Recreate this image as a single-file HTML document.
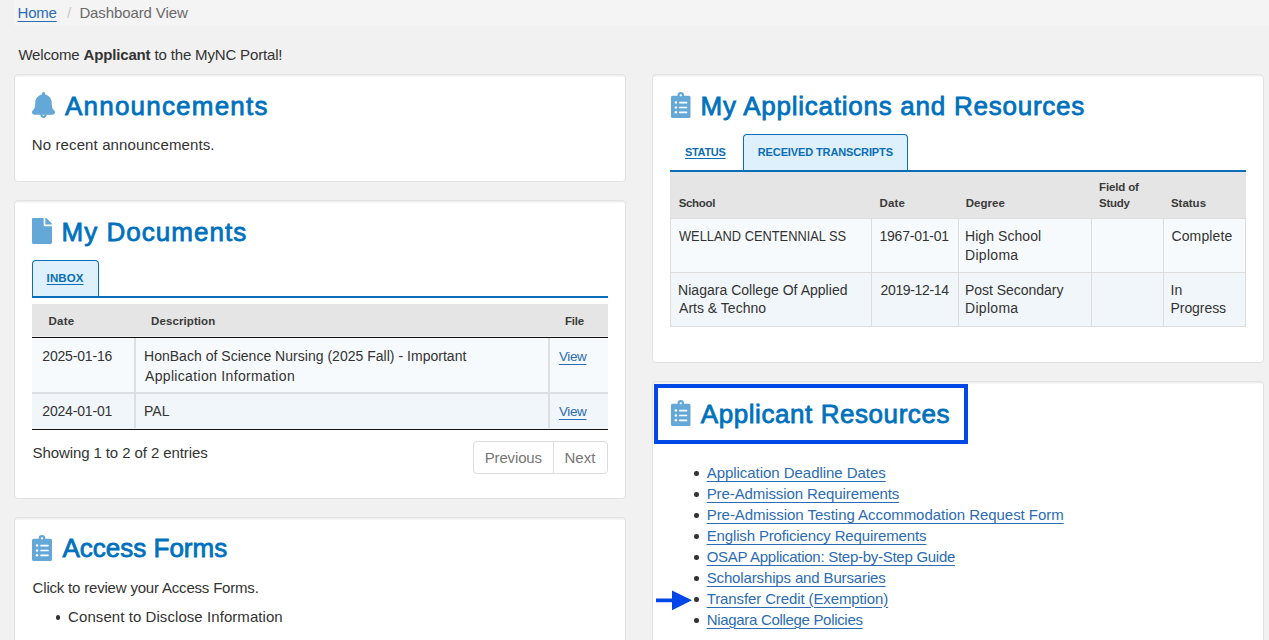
<!DOCTYPE html>
<html><head><meta charset="utf-8"><style>
html,body{margin:0;padding:0;}
body{background:#f1f1f1;font-family:"Liberation Sans", sans-serif;position:relative;}
.t{position:absolute;white-space:nowrap;line-height:20px;}
.h{-webkit-text-stroke:0.8px currentColor;}
.u{text-decoration:underline;text-decoration-thickness:1px;text-underline-offset:3px;}
.lnk .u{text-underline-offset:3px;}
.tabu .u{text-underline-offset:2px;}
.bl{display:inline-block;width:0;height:0;vertical-align:baseline;}

body{width:1269px;height:640px;overflow:hidden;}
</style></head><body>
<div style="position:absolute;left:14px;top:0px;width:1255px;height:26px;background:#f4f4f4;"></div>
<div style="position:absolute;left:14px;top:74px;width:612px;height:108px;background:linear-gradient(#f0f0f0 0 1px,#f6f6f6 1px 2px,#fff 2px);border:1px solid #e2e2e2;border-radius:4px;box-sizing:border-box;"></div>
<div style="position:absolute;left:14px;top:200px;width:612px;height:299px;background:linear-gradient(#f0f0f0 0 1px,#f6f6f6 1px 2px,#fff 2px);border:1px solid #e2e2e2;border-radius:4px;box-sizing:border-box;"></div>
<div style="position:absolute;left:14px;top:517px;width:612px;height:200px;background:linear-gradient(#f0f0f0 0 1px,#f6f6f6 1px 2px,#fff 2px);border:1px solid #e2e2e2;border-radius:4px;box-sizing:border-box;"></div>
<div style="position:absolute;left:652px;top:74px;width:612px;height:289px;background:linear-gradient(#f0f0f0 0 1px,#f6f6f6 1px 2px,#fff 2px);border:1px solid #e2e2e2;border-radius:4px;box-sizing:border-box;"></div>
<div style="position:absolute;left:652px;top:381px;width:612px;height:400px;background:linear-gradient(#f0f0f0 0 1px,#f6f6f6 1px 2px,#fff 2px);border:1px solid #e2e2e2;border-radius:4px;box-sizing:border-box;"></div>
<div style="position:absolute;left:32px;top:92px;width:23px;height:26px;line-height:0"><svg viewBox="0 0 448 512" width="23" height="26" preserveAspectRatio="none"><path fill="#64a8d8" d="M433.884 366.059C411.634 343.809 384 316.118 384 208c0-79.394-57.831-145.269-133.663-157.83A31.845 31.845 0 0 0 256 32c0-17.673-14.327-32-32-32s-32 14.327-32 32c0 6.75 2.095 13.008 5.663 18.17C121.831 62.731 64 128.606 64 208c0 108.118-27.643 135.809-49.893 158.059C-16.042 396.208 5.325 448 48.048 448H160c0 35.346 28.654 64 64 64s64-28.654 64-64h111.943c42.638 0 64.151-51.731 33.941-81.941zM224 472c-13.234 0-24-10.766-24-24h48c0 13.234-10.766 24-24 24z"/></svg></div>
<div style="position:absolute;left:32px;top:218px;width:20px;height:26px;line-height:0"><svg viewBox="0 0 384 512" width="20" height="26" preserveAspectRatio="none"><path fill="#64a8d8" d="M224 136V0H24C10.7 0 0 10.7 0 24v464c0 13.3 10.7 24 24 24h336c13.3 0 24-10.7 24-24V160H248c-13.2 0-24-10.8-24-24zm160-14.1v6.1H256V0h6.1c6.4 0 12.5 2.5 17 7l97.9 98c4.5 4.5 7 10.6 7 16.9z"/></svg></div>
<div style="position:absolute;left:32px;top:260px;width:67px;height:38px;background:#ddf0fb;border:1px solid #0a6fb8;border-bottom:none;border-radius:4px 4px 0 0;box-sizing:border-box;"></div>
<div style="position:absolute;left:32px;top:296px;width:576px;height:2px;background:#0a6fb8;"></div>
<div style="position:absolute;left:32px;top:304px;width:576px;height:33px;background:#e5e5e5;"></div>
<div style="position:absolute;left:32px;top:336px;width:576px;height:1px;background:#f0f0f0;"></div>
<div style="position:absolute;left:32px;top:337px;width:576px;height:1px;background:#111;"></div>
<div style="position:absolute;left:32px;top:338px;width:576px;height:55px;background:#f7fafc;"></div>
<div style="position:absolute;left:32px;top:392px;width:576px;height:2px;background:#dde0e3;"></div>
<div style="position:absolute;left:32px;top:394px;width:576px;height:35px;background:#f1f6fa;"></div>
<div style="position:absolute;left:32px;top:429px;width:576px;height:1px;background:#111;"></div>
<div style="position:absolute;left:134px;top:338px;width:2px;height:90px;background:#dde0e3;"></div>
<div style="position:absolute;left:548px;top:338px;width:2px;height:90px;background:#dde0e3;"></div>
<div style="position:absolute;left:473px;top:441px;width:135px;height:33px;background:#fff;border:1px solid #dddddd;border-radius:4px;box-sizing:border-box;"></div>
<div style="position:absolute;left:553px;top:442px;width:1px;height:31px;background:#dddddd;"></div>
<div style="position:absolute;left:32px;top:535px;width:20px;height:26px;line-height:0"><svg viewBox="0 0 384 512" width="20" height="26" preserveAspectRatio="none"><path fill="#64a8d8" d="M30 74H354A30 30 0 0 1 384 104V482A30 30 0 0 1 354 512H30A30 30 0 0 1 0 482V104A30 30 0 0 1 30 74ZM128 64A64 64 0 1 1 256 64A64 64 0 1 1 128 64Z"/><g fill="#fff"><circle cx="192" cy="66" r="22"/><circle cx="96" cy="208" r="24"/><circle cx="96" cy="304" r="24"/><circle cx="96" cy="400" r="24"/><rect x="160" y="192" width="160" height="32" rx="6"/><rect x="160" y="288" width="160" height="32" rx="6"/><rect x="160" y="384" width="160" height="32" rx="6"/></g></svg></div>
<div style="position:absolute;left:55.75px;top:615.25px;width:4.5px;height:4.5px;border-radius:50%;background:#333"></div>
<div style="position:absolute;left:671px;top:92px;width:19.5px;height:26px;line-height:0"><svg viewBox="0 0 384 512" width="19.5" height="26" preserveAspectRatio="none"><path fill="#64a8d8" d="M30 74H354A30 30 0 0 1 384 104V482A30 30 0 0 1 354 512H30A30 30 0 0 1 0 482V104A30 30 0 0 1 30 74ZM128 64A64 64 0 1 1 256 64A64 64 0 1 1 128 64Z"/><g fill="#fff"><circle cx="192" cy="66" r="22"/><circle cx="96" cy="208" r="24"/><circle cx="96" cy="304" r="24"/><circle cx="96" cy="400" r="24"/><rect x="160" y="192" width="160" height="32" rx="6"/><rect x="160" y="288" width="160" height="32" rx="6"/><rect x="160" y="384" width="160" height="32" rx="6"/></g></svg></div>
<div style="position:absolute;left:743px;top:134px;width:165px;height:38px;background:#ddf0fb;border:1px solid #0a6fb8;border-bottom:none;border-radius:4px 4px 0 0;box-sizing:border-box;"></div>
<div style="position:absolute;left:670px;top:170px;width:576px;height:2px;background:#0a6fb8;"></div>
<div style="position:absolute;left:670px;top:172px;width:576px;height:46px;background:#e5e5e5;"></div>
<div style="position:absolute;left:670px;top:218px;width:576px;height:55px;background:#f7fafc;border:1px solid #dddddd;box-sizing:border-box;"></div>
<div style="position:absolute;left:670px;top:272px;width:576px;height:55px;background:#f1f6fa;border:1px solid #dddddd;box-sizing:border-box;"></div>
<div style="position:absolute;left:871px;top:218px;width:1px;height:109px;background:#dddddd;"></div>
<div style="position:absolute;left:958px;top:218px;width:1px;height:109px;background:#dddddd;"></div>
<div style="position:absolute;left:1091px;top:218px;width:1px;height:109px;background:#dddddd;"></div>
<div style="position:absolute;left:1163px;top:218px;width:1px;height:109px;background:#dddddd;"></div>
<div style="position:absolute;left:654px;top:384px;width:314px;height:60px;border:4px solid #0048e6;box-sizing:border-box;"></div>
<div style="position:absolute;left:671px;top:400px;width:19.5px;height:26px;line-height:0"><svg viewBox="0 0 384 512" width="19.5" height="26" preserveAspectRatio="none"><path fill="#64a8d8" d="M30 74H354A30 30 0 0 1 384 104V482A30 30 0 0 1 354 512H30A30 30 0 0 1 0 482V104A30 30 0 0 1 30 74ZM128 64A64 64 0 1 1 256 64A64 64 0 1 1 128 64Z"/><g fill="#fff"><circle cx="192" cy="66" r="22"/><circle cx="96" cy="208" r="24"/><circle cx="96" cy="304" r="24"/><circle cx="96" cy="400" r="24"/><rect x="160" y="192" width="160" height="32" rx="6"/><rect x="160" y="288" width="160" height="32" rx="6"/><rect x="160" y="384" width="160" height="32" rx="6"/></g></svg></div>
<div style="position:absolute;left:694.05px;top:471.35px;width:4.5px;height:4.5px;border-radius:50%;background:#333"></div>
<div style="position:absolute;left:694.05px;top:492.30px;width:4.5px;height:4.5px;border-radius:50%;background:#333"></div>
<div style="position:absolute;left:694.05px;top:513.25px;width:4.5px;height:4.5px;border-radius:50%;background:#333"></div>
<div style="position:absolute;left:694.05px;top:534.20px;width:4.5px;height:4.5px;border-radius:50%;background:#333"></div>
<div style="position:absolute;left:694.05px;top:555.15px;width:4.5px;height:4.5px;border-radius:50%;background:#333"></div>
<div style="position:absolute;left:694.05px;top:576.10px;width:4.5px;height:4.5px;border-radius:50%;background:#333"></div>
<div style="position:absolute;left:694.05px;top:597.05px;width:4.5px;height:4.5px;border-radius:50%;background:#333"></div>
<div style="position:absolute;left:694.05px;top:618.00px;width:4.5px;height:4.5px;border-radius:50%;background:#333"></div>
<svg style="position:absolute;left:0;top:0" width="1269" height="640"><path d="M656 598.4H672V590.4L692 600.3 672 610.2V602.2H656Z" fill="#0046e8"/></svg>
<div class="t " style="left:17.50px;top:3.00px;font-size:15px;color:#2b6cb3;letter-spacing:-0.200px;"><span class="u">Home</span></div>
<div class="t " style="left:67.00px;top:3.00px;font-size:15px;color:#c8c8c8;">/</div>
<div class="t " style="left:79.40px;top:3.00px;font-size:15px;color:#6a6a6a;letter-spacing:-0.108px;">Dashboard View</div>
<div class="t " style="left:18.40px;top:45.30px;font-size:15px;color:#333;letter-spacing:-0.158px;">Welcome <b>Applicant</b> to the MyNC Portal!</div>
<div class="t h" style="left:65.00px;top:96.00px;font-size:26px;color:#0071bd;letter-spacing:1.208px;">Announcements</div>
<div class="t " style="left:31.80px;top:134.70px;font-size:15px;color:#333;letter-spacing:0.113px;">No recent announcements.</div>
<div class="t h" style="left:61.50px;top:221.50px;font-size:26px;color:#0071bd;letter-spacing:1.027px;">My Documents</div>
<div class="t tabu" style="left:46.60px;top:267.80px;font-size:11.5px;color:#0b6db5;font-weight:bold;letter-spacing:0.100px;"><span class="u">INBOX</span></div>
<div class="t " style="left:48.50px;top:311.00px;font-size:11.5px;color:#3a3a3a;font-weight:bold;letter-spacing:0.233px;">Date</div>
<div class="t " style="left:151.00px;top:311.00px;font-size:11.5px;color:#3a3a3a;font-weight:bold;letter-spacing:0.100px;">Description</div>
<div class="t " style="left:565.00px;top:311.00px;font-size:11.5px;color:#3a3a3a;font-weight:bold;letter-spacing:-0.233px;">File</div>
<div class="t " style="left:42.30px;top:345.80px;font-size:14px;color:#333;letter-spacing:-0.178px;">2025-01-16</div>
<div class="t " style="left:144.00px;top:345.80px;font-size:14px;color:#333;letter-spacing:0.020px;">HonBach of Science Nursing (2025 Fall) - Important</div>
<div class="t " style="left:145.00px;top:365.60px;font-size:14px;color:#333;letter-spacing:0.332px;">Application Information</div>
<div class="t " style="left:558.90px;top:347.00px;font-size:13.5px;color:#2b6cb3;letter-spacing:-0.367px;"><span class="u">View</span></div>
<div class="t " style="left:42.30px;top:401.00px;font-size:14px;color:#333;letter-spacing:-0.178px;">2024-01-01</div>
<div class="t " style="left:144.00px;top:401.00px;font-size:14px;color:#333;">PAL</div>
<div class="t " style="left:558.90px;top:402.00px;font-size:13.5px;color:#2b6cb3;letter-spacing:-0.367px;"><span class="u">View</span></div>
<div class="t " style="left:32.50px;top:443.00px;font-size:15px;color:#333;letter-spacing:-0.092px;">Showing 1 to 2 of 2 entries</div>
<div class="t " style="left:484.70px;top:448.00px;font-size:15px;color:#777;letter-spacing:-0.143px;">Previous</div>
<div class="t " style="left:564.50px;top:448.00px;font-size:15px;color:#777;">Next</div>
<div class="t h" style="left:62.50px;top:538.40px;font-size:26px;color:#0071bd;">Access Forms</div>
<div class="t " style="left:32.60px;top:577.70px;font-size:15px;color:#333;letter-spacing:-0.191px;">Click to review your Access Forms.</div>
<div class="t " style="left:68.10px;top:607.00px;font-size:15px;color:#333;letter-spacing:0.067px;">Consent to Disclose Information</div>
<div class="t h" style="left:700.50px;top:96.00px;font-size:26px;color:#0071bd;letter-spacing:0.750px;">My Applications and Resources</div>
<div class="t tabu" style="left:684.90px;top:142.10px;font-size:11px;color:#0b6db5;font-weight:bold;letter-spacing:-0.280px;"><span class="u">STATUS</span></div>
<div class="t " style="left:757.80px;top:142.00px;font-size:11px;color:#0b6db5;font-weight:bold;letter-spacing:-0.121px;">RECEIVED TRANSCRIPTS</div>
<div class="t " style="left:678.70px;top:192.80px;font-size:11.5px;color:#3a3a3a;font-weight:bold;letter-spacing:-0.320px;">School</div>
<div class="t " style="left:879.60px;top:193.00px;font-size:11.5px;color:#3a3a3a;font-weight:bold;letter-spacing:0.133px;">Date</div>
<div class="t " style="left:965.80px;top:193.00px;font-size:11.5px;color:#3a3a3a;font-weight:bold;">Degree</div>
<div class="t " style="left:1099.00px;top:177.00px;font-size:11.5px;color:#3a3a3a;font-weight:bold;letter-spacing:-0.143px;">Field of</div>
<div class="t " style="left:1099.00px;top:193.00px;font-size:11.5px;color:#3a3a3a;font-weight:bold;letter-spacing:-0.250px;">Study</div>
<div class="t " style="left:1170.90px;top:193.00px;font-size:11.5px;color:#3a3a3a;font-weight:bold;">Status</div>
<div class="t " style="left:678.90px;top:226.30px;font-size:14px;color:#333;transform:scaleX(0.917);transform-origin:0 0;">WELLAND CENTENNIAL SS</div>
<div class="t " style="left:879.50px;top:226.40px;font-size:14px;color:#333;letter-spacing:-0.233px;">1967-01-01</div>
<div class="t " style="left:965.00px;top:226.40px;font-size:14px;color:#333;letter-spacing:0.070px;">High School</div>
<div class="t " style="left:965.00px;top:245.20px;font-size:14px;color:#333;letter-spacing:0.300px;">Diploma</div>
<div class="t " style="left:1171.50px;top:226.40px;font-size:14px;color:#333;letter-spacing:0.114px;">Complete</div>
<div class="t " style="left:678.10px;top:279.50px;font-size:14px;color:#333;letter-spacing:0.020px;">Niagara College Of Applied</div>
<div class="t " style="left:679.10px;top:298.00px;font-size:14px;color:#333;">Arts &amp; Techno</div>
<div class="t " style="left:880.50px;top:279.50px;font-size:14px;color:#333;letter-spacing:-0.344px;">2019-12-14</div>
<div class="t " style="left:965.00px;top:279.50px;font-size:14px;color:#333;letter-spacing:-0.031px;">Post Secondary</div>
<div class="t " style="left:965.00px;top:298.00px;font-size:14px;color:#333;letter-spacing:0.300px;">Diploma</div>
<div class="t " style="left:1170.50px;top:279.50px;font-size:14px;color:#333;">In</div>
<div class="t " style="left:1170.50px;top:298.00px;font-size:14px;color:#333;letter-spacing:-0.057px;">Progress</div>
<div class="t h" style="left:700.80px;top:403.90px;font-size:26px;color:#0071bd;letter-spacing:0.567px;">Applicant Resources</div>
<div class="t lnk" style="left:706.70px;top:462.90px;font-size:15px;color:#2b6cb3;letter-spacing:-0.040px;"><span class="u">Application Deadline Dates</span></div>
<div class="t lnk" style="left:706.70px;top:483.85px;font-size:15px;color:#2b6cb3;letter-spacing:-0.096px;"><span class="u">Pre-Admission Requirements</span></div>
<div class="t lnk" style="left:706.70px;top:504.80px;font-size:15px;color:#2b6cb3;letter-spacing:-0.043px;"><span class="u">Pre-Admission Testing Accommodation Request Form</span></div>
<div class="t lnk" style="left:706.70px;top:525.75px;font-size:15px;color:#2b6cb3;letter-spacing:-0.145px;"><span class="u">English Proficiency Requirements</span></div>
<div class="t lnk" style="left:706.70px;top:546.70px;font-size:15px;color:#2b6cb3;letter-spacing:-0.274px;"><span class="u">OSAP Application: Step-by-Step Guide</span></div>
<div class="t lnk" style="left:706.70px;top:567.65px;font-size:15px;color:#2b6cb3;letter-spacing:-0.140px;"><span class="u">Scholarships and Bursaries</span></div>
<div class="t lnk" style="left:706.70px;top:588.60px;font-size:15px;color:#2b6cb3;letter-spacing:-0.112px;"><span class="u">Transfer Credit (Exemption)</span></div>
<div class="t lnk" style="left:706.70px;top:609.55px;font-size:15px;color:#2b6cb3;letter-spacing:-0.313px;"><span class="u">Niagara College Policies</span></div>
</body></html>
